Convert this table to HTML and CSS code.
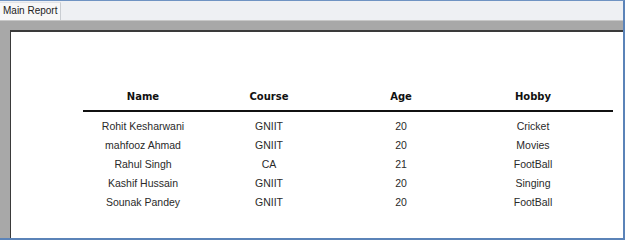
FILE: index.html
```html
<!DOCTYPE html>
<html>
<head>
<meta charset="utf-8">
<link rel="stylesheet" href="styles.css">
</head>
<body>
<div class="frame">
  <div class="tabstrip">
    <div class="tab">Main Report</div>
  </div>
  <div class="viewer">
    <div class="page">
      <div class="report">
        <div class="row head">
          <div class="c1">Name</div>
          <div class="c2">Course</div>
          <div class="c3">Age</div>
          <div class="c4">Hobby</div>
        </div>
        <div class="rule"></div>
        <div class="row">
          <div class="c1">Rohit Kesharwani</div><div class="c2">GNIIT</div><div class="c3">20</div><div class="c4">Cricket</div>
        </div>
        <div class="row">
          <div class="c1">mahfooz Ahmad</div><div class="c2">GNIIT</div><div class="c3">20</div><div class="c4">Movies</div>
        </div>
        <div class="row">
          <div class="c1">Rahul Singh</div><div class="c2">CA</div><div class="c3">21</div><div class="c4">FootBall</div>
        </div>
        <div class="row">
          <div class="c1">Kashif Hussain</div><div class="c2">GNIIT</div><div class="c3">20</div><div class="c4">Singing</div>
        </div>
        <div class="row">
          <div class="c1">Sounak Pandey</div><div class="c2">GNIIT</div><div class="c3">20</div><div class="c4">FootBall</div>
        </div>
      </div>
    </div>
  </div>
</div>
</body>
</html>
```
FILE: styles.css
```css
html, body {
  margin: 0;
  padding: 0;
  background: #ffffff;
}
.frame {
  width: 623px;
  height: 237px;
  border-top: 1px solid #6f93c2;
  border-right: 2px solid #5b83b8;
  border-bottom: 2px solid #5b83b8;
  display: flex;
  flex-direction: column;
  overflow: hidden;
}
.tabstrip {
  height: 19px;
  background: #eef0f3;
  display: flex;
  align-items: flex-end;
  flex-shrink: 0;
}
.tab {
  height: 18px;
  box-sizing: border-box;
  padding: 0 3px 0 3px;
  background: #f7f7f7;
  border-right: 1px solid #c9cdd2;
  border-top: 1px solid #e2e4e7;
  font-family: "Liberation Sans", Arial, sans-serif;
  font-size: 10px;
  line-height: 16px;
  color: #222;
}
.viewer {
  flex: 1;
  background: #a8a8a8;
  padding: 9px 0 0 10px;
  display: flex;
  border-top: 1px solid #c8c8c8;
}
.page {
  flex: 1;
  background: #ffffff;
  border-top: 2px solid #3a3a3a;
  border-left: 1px solid #3a3a3a;
}
.report {
  margin: 58px 0 0 72px;
  width: 530px;
}
.row {
  display: grid;
  grid-template-columns: 120px 132px 132px 132px;
  font-family: "Liberation Sans", Arial, sans-serif;
  font-size: 10.5px;
  line-height: 19px;
  color: #2a2a2a;
  text-align: center;
}
.row.head {
  font-family: "DejaVu Sans", Verdana, sans-serif;
  font-weight: bold;
  font-size: 10px;
  line-height: 14px;
  color: #111;
  margin-bottom: 6px;
}
.rule {
  height: 2px;
  background: #111;
  margin-bottom: 5px;
}
```
